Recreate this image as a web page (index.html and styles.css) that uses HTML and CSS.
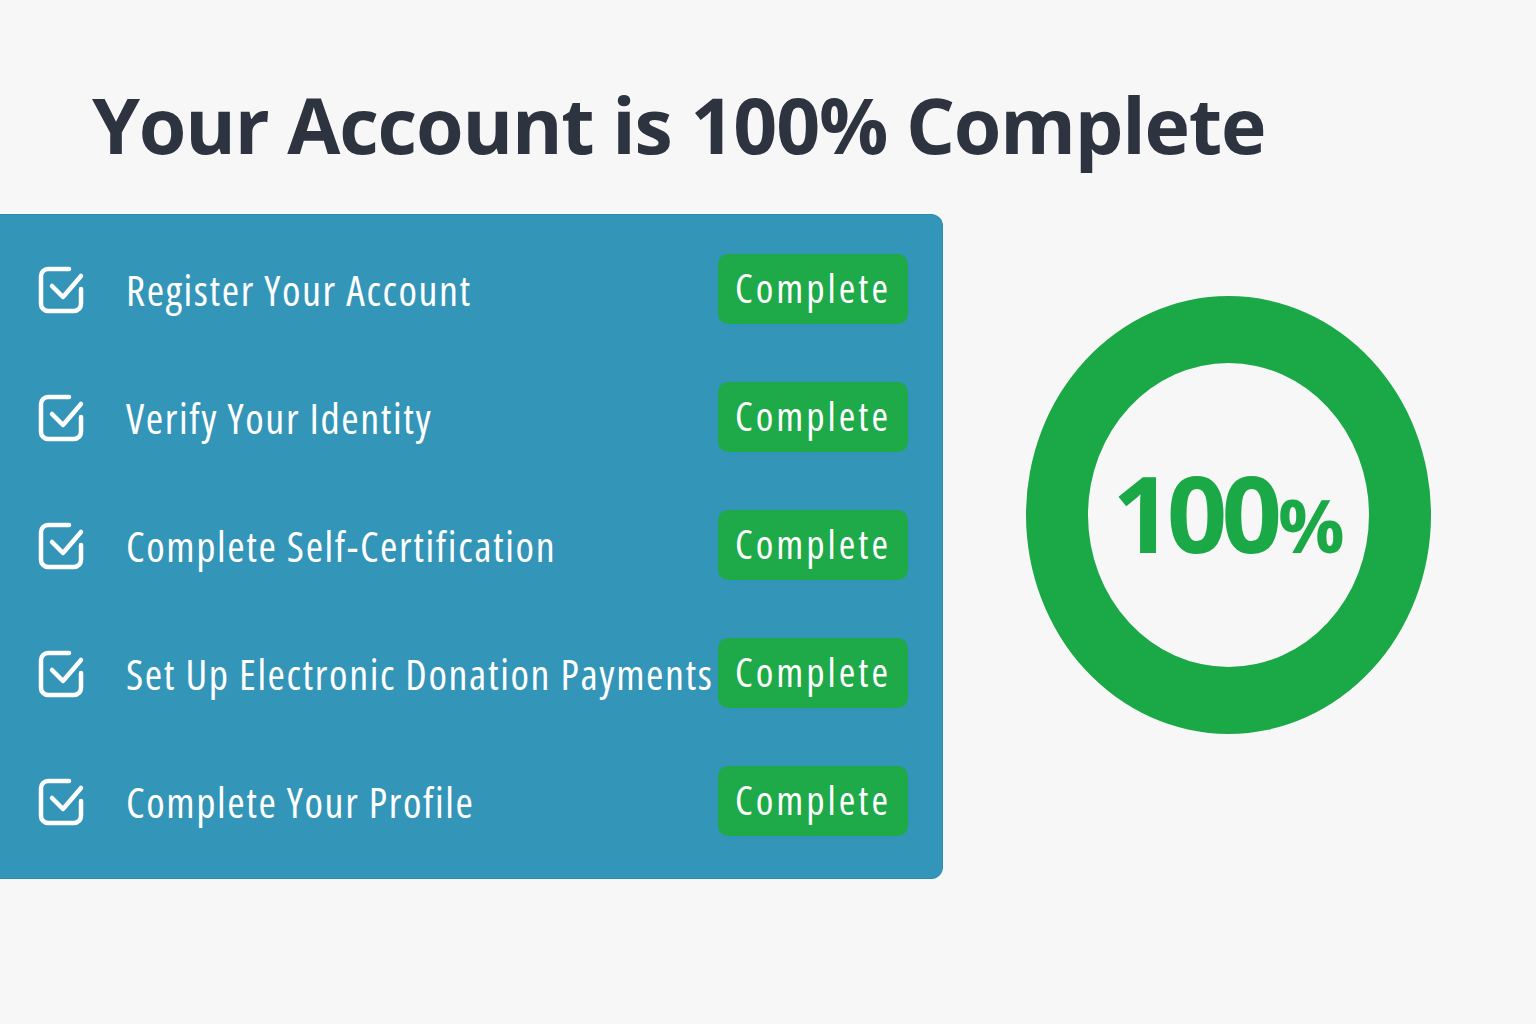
FILE: index.html
```html
<!DOCTYPE html>
<html lang="en">
<head>
  <meta charset="UTF-8" />
  <title>Account Progress</title>
  <link rel="stylesheet" href="styles.css">
</head>
<body>

<h1 class="title">Your Account is 100% Complete</h1>

<div class="content">
  <ul class="steps">
    <li class="step">
      <svg class="check" viewBox="0 0 48 50"><path d="M31 5H10a7 7 0 0 0-7 7v28a7 7 0 0 0 7 7h26a7 7 0 0 0 7-7V25" /><path d="M14 22l11 11 18-21" /></svg>
      <span class="label">Register Your Account</span>
      <span class="badge">Complete</span>
    </li>
    <li class="step">
      <svg class="check" viewBox="0 0 48 50"><path d="M31 5H10a7 7 0 0 0-7 7v28a7 7 0 0 0 7 7h26a7 7 0 0 0 7-7V25" /><path d="M14 22l11 11 18-21" /></svg>
      <span class="label">Verify Your Identity</span>
      <span class="badge">Complete</span>
    </li>
    <li class="step">
      <svg class="check" viewBox="0 0 48 50"><path d="M31 5H10a7 7 0 0 0-7 7v28a7 7 0 0 0 7 7h26a7 7 0 0 0 7-7V25" /><path d="M14 22l11 11 18-21" /></svg>
      <span class="label">Complete Self-Certification</span>
      <span class="badge">Complete</span>
    </li>
    <li class="step">
      <svg class="check" viewBox="0 0 48 50"><path d="M31 5H10a7 7 0 0 0-7 7v28a7 7 0 0 0 7 7h26a7 7 0 0 0 7-7V25" /><path d="M14 22l11 11 18-21" /></svg>
      <span class="label">Set Up Electronic Donation Payments</span>
      <span class="badge">Complete</span>
    </li>
    <li class="step">
      <svg class="check" viewBox="0 0 48 50"><path d="M31 5H10a7 7 0 0 0-7 7v28a7 7 0 0 0 7 7h26a7 7 0 0 0 7-7V25" /><path d="M14 22l11 11 18-21" /></svg>
      <span class="label">Complete Your Profile</span>
      <span class="badge">Complete</span>
    </li>
  </ul>

  <div class="progress">
    <div class="ring">
      <span class="pct">100<small>%</small></span>
    </div>
  </div>
</div>

</body>
</html>
```

FILE: styles.css
```css
body {
  font-family: 'Open Sans', sans-serif;
  background: #f7f7f7;
  margin: 0;
  padding: 0;
}
.title {
  margin: 0;
  padding: 70px 0 0 92px;
  height: 144px;
  font-size: 77px;
  font-weight: 700;
  letter-spacing: -1.2px;
  line-height: 110px;
  color: #2e3340;
}
.content {
  display: flex;
  align-items: flex-start;
}
.steps {
  list-style: none;
  margin: 0;
  padding: 10px 34px 13px 38px;
  width: 943px;
  box-sizing: border-box;
  background: #3395b8;
  border: 1px solid #2a8db1;
  border-left: none;
  border-radius: 0 12px 12px 0;
}
.step {
  display: flex;
  align-items: center;
  height: 128px;
}
.check {
  width: 48px;
  height: 50px;
  fill: none;
  stroke: #fff;
  stroke-width: 4.5;
  stroke-linecap: round;
  stroke-linejoin: round;
  flex-shrink: 0;
}
.label {
  flex: 1;
  min-width: 0;
  margin-left: 40px;
  font-size: 42px;
  font-weight: 500;
  font-stretch: 75%;
  letter-spacing: 1.6px;
  color: #fff;
  white-space: nowrap;
}
.badge {
  flex-shrink: 0;
  width: 190px;
  height: 70px;
  line-height: 68px;
  text-align: center;
  background: #1eaa48;
  border-radius: 10px;
  color: #fff;
  font-size: 40px;
  font-weight: 500;
  font-stretch: 75%;
  letter-spacing: 3px;
}
.progress {
  flex: 1;
  display: flex;
  justify-content: center;
  padding: 82px 22px 0 0;
}
.ring {
  width: 281px;
  height: 304px;
  border-style: solid;
  border-color: #1ba846;
  border-width: 67px 62px;
  border-radius: 50%;
  display: flex;
  align-items: center;
  justify-content: center;
}
.pct {
  font-size: 106px;
  font-weight: 700;
  color: #1ba846;
  letter-spacing: -6px;
  margin-top: -6px;
}
.pct small {
  font-size: 74px;
  letter-spacing: 0;
  margin-left: 2px;
}
```
